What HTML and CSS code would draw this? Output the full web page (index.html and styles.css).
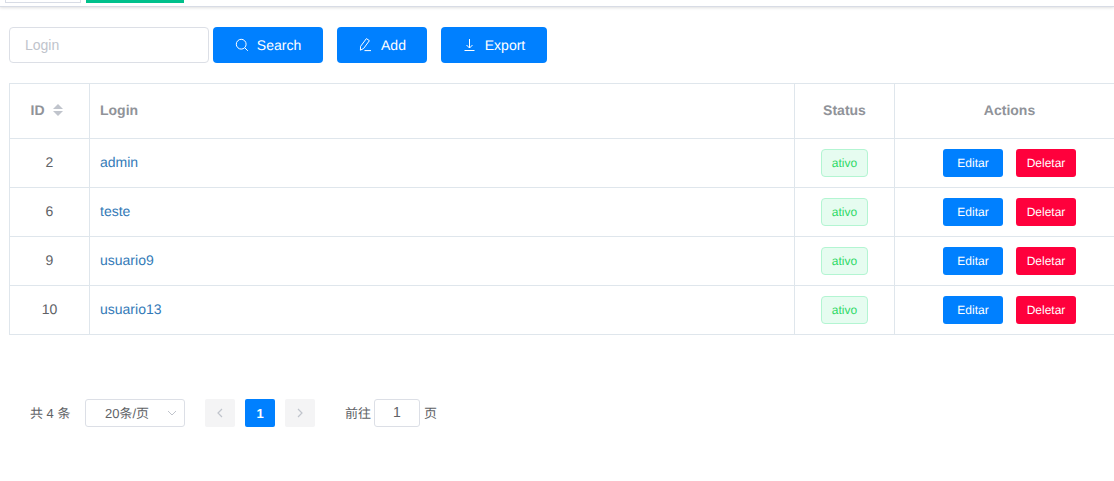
FILE: index.html
```html
<!DOCTYPE html>
<html lang="en">
<head>
  <meta charset="UTF-8">
  <title>Usuarios</title>
  <link rel="stylesheet" href="styles.css">
</head>
<body>
  <div class="tags-bar">
    <span class="tag"></span>
    <span class="tag tag-active"></span>
  </div>

  <div class="filter">
    <input class="filter-input" type="text" placeholder="Login">
    <button class="btn btn-search">
      <svg class="btn-icon" viewBox="0 0 14 14"><circle cx="6.2" cy="6.2" r="4.9"/><path d="M9.8 9.8l3 3"/></svg>
      <span>Search</span>
    </button>
    <button class="btn btn-add">
      <svg class="btn-icon" viewBox="0 0 14 14"><path d="M2.4 12.2l.2-3.9L8.4.6l3 2.1-5.8 7.8z"/><path d="M6.5 12.6h6.5"/></svg>
      <span>Add</span>
    </button>
    <button class="btn btn-export">
      <svg class="btn-icon" viewBox="0 0 14 14"><path d="M6.5 1v9M3.5 7l3 3 3-3M1.5 12.5h10"/></svg>
      <span>Export</span>
    </button>
  </div>

  <table class="users">
    <thead>
      <tr>
        <th class="col-id"><span class="id-head">ID<span class="sort"><i class="up"></i><i class="down"></i></span></span></th>
        <th class="col-login">Login</th>
        <th class="col-status">Status</th>
        <th class="col-actions">Actions</th>
      </tr>
    </thead>
    <tbody>
      <tr>
        <td class="col-id">2</td>
        <td class="col-login">admin</td>
        <td class="col-status"><span class="badge">ativo</span></td>
        <td class="col-actions"><button class="small edit">Editar</button><button class="small del">Deletar</button></td>
      </tr>
      <tr>
        <td class="col-id">6</td>
        <td class="col-login">teste</td>
        <td class="col-status"><span class="badge">ativo</span></td>
        <td class="col-actions"><button class="small edit">Editar</button><button class="small del">Deletar</button></td>
      </tr>
      <tr>
        <td class="col-id">9</td>
        <td class="col-login">usuario9</td>
        <td class="col-status"><span class="badge">ativo</span></td>
        <td class="col-actions"><button class="small edit">Editar</button><button class="small del">Deletar</button></td>
      </tr>
      <tr>
        <td class="col-id">10</td>
        <td class="col-login">usuario13</td>
        <td class="col-status"><span class="badge">ativo</span></td>
        <td class="col-actions"><button class="small edit">Editar</button><button class="small del">Deletar</button></td>
      </tr>
    </tbody>
  </table>

  <div class="pagination">
    <span class="total page-text">共 4 条</span>
    <div class="page-size">
      <span class="page-text">20条/页</span>
      <svg class="chev" viewBox="0 0 10 6"><path d="M1 1l4 4 4-4"/></svg>
    </div>
    <button class="page-btn"><svg viewBox="0 0 6 10"><path d="M5 1L1 5l4 4"/></svg></button>
    <button class="page-btn current">1</button>
    <button class="page-btn"><svg viewBox="0 0 6 10"><path d="M1 1l4 4-4 4"/></svg></button>
    <div class="jump">
      <span class="page-text">前往</span>
      <input class="jump-input" type="text" value="1">
      <span class="page-text">页</span>
    </div>
  </div>
</body>
</html>
```

FILE: styles.css
```css
html, body {
  overflow: hidden;
}

body {
  margin: 0;
  width: 1114px;
  height: 481px;
  background-color: #fff;
  font-family: "Liberation Sans", Arial, "Noto Sans CJK SC", sans-serif;
  font-size: 14px;
  color: #606266;
  text-rendering: geometricPrecision;
}

/* Top tags bar, cut off by the window */
.tags-bar {
  display: flex;
  gap: 5px;
  height: 6px;
  padding-left: 5px;
  background-color: #fff;
  border-bottom: 1px solid #d8dce5;
  box-shadow: 0 1px 3px rgba(0, 0, 0, 0.12);
}

.tag {
  box-sizing: border-box;
  width: 76px;
  height: 3px;
  border: 1px solid #d8dce5;
  border-top: none;
}

.tag-active {
  width: 98px;
  background-color: #00c08b;
  border: none;
}

.filter {
  display: flex;
  align-items: center;
  padding: 20px 0 0 9px;
}

.filter-input {
  box-sizing: border-box;
  width: 200px;
  height: 36px;
  padding: 0 15px;
  border: 1px solid #dcdfe6;
  border-radius: 4px;
  font-family: inherit;
  font-size: 14px;
  color: #606266;
  outline: none;
}

.filter-input::placeholder {
  color: #c0c4cc;
}

.btn {
  display: flex;
  align-items: center;
  justify-content: center;
  gap: 8px;
  height: 36px;
  padding: 0;
  border: none;
  border-radius: 4px;
  background-color: #0080ff;
  color: #fff;
  font-family: inherit;
  font-size: 14px;
  text-rendering: geometricPrecision;
}

.btn-search {
  width: 110px;
  margin-left: 4px;
}

.btn-add {
  gap: 9px;
  width: 90px;
  margin-left: 14px;
}

.btn-export {
  width: 106px;
  margin-left: 14px;
}

.btn-icon {
  width: 14px;
  height: 14px;
  fill: none;
  stroke: #fff;
  stroke-width: 1;
}

/* Table runs past the right edge of the window */
.users {
  width: 1116px;
  margin: 20px 0 0 9px;
  border-collapse: collapse;
  table-layout: fixed;
}

.users th,
.users td {
  padding: 0;
  border: 1px solid #dfe6ec;
}

.users th {
  height: 52px;
  padding-bottom: 2px;
  font-size: 14px;
  font-weight: bold;
  color: #909399;
  text-align: center;
}

.users td {
  height: 48px;
  text-align: center;
}

.users td.col-id,
.users td.col-login {
  height: 46px;
  padding-bottom: 2px;
}

.users .col-id {
  width: 79px;
}

.users th.col-id {
  padding-right: 6px;
  width: 73px;
}

.id-head {
  display: inline-flex;
  align-items: center;
  gap: 8px;
}

.users .col-login {
  padding-left: 10px;
  text-align: left;
}

.users td.col-login {
  color: #337ab7;
}

.users .col-status {
  width: 99px;
}

.users .col-actions {
  width: 229px;
}

.sort {
  display: inline-flex;
  flex-direction: column;
  gap: 2px;
}

.sort i {
  display: block;
  width: 0;
  height: 0;
  border-left: 5px solid transparent;
  border-right: 5px solid transparent;
}

.sort .up {
  border-bottom: 5px solid #c0c4cc;
}

.sort .down {
  border-top: 5px solid #c0c4cc;
}

.badge {
  display: inline-block;
  box-sizing: border-box;
  width: 47px;
  height: 28px;
  border: 1px solid #b3f5d2;
  border-radius: 4px;
  background-color: #e6fcf0;
  color: #30d968;
  font-size: 12px;
  line-height: 26px;
  vertical-align: middle;
}

.small {
  width: 60px;
  height: 28px;
  padding: 0;
  border: none;
  border-radius: 3px;
  color: #fff;
  font-family: inherit;
  font-size: 12px;
  text-rendering: geometricPrecision;
  vertical-align: middle;
}

.small.edit {
  background-color: #0080ff;
}

.small.del {
  margin-left: 13px;
  background-color: #ff003c;
}

.pagination {
  display: flex;
  align-items: center;
  height: 28px;
  margin-top: 64px;
  padding-left: 30px;
  font-size: 13px;
}

.page-text {
  padding-bottom: 2px;
}

.total {
  width: 55px;
}

.page-size {
  display: flex;
  align-items: center;
  justify-content: space-between;
  box-sizing: border-box;
  width: 100px;
  height: 28px;
  padding: 0 7px 0 19px;
  border: 1px solid #dcdfe6;
  border-radius: 3px;
}

.chev {
  width: 10px;
  height: 6px;
  fill: none;
  stroke: #c0c4cc;
}

.page-btn {
  display: flex;
  align-items: center;
  justify-content: center;
  width: 30px;
  height: 28px;
  margin-left: 10px;
  padding: 0;
  border: none;
  border-radius: 2px;
  background-color: #f4f4f5;
  font-family: inherit;
  font-size: 13px;
  font-weight: bold;
}

.page-btn svg {
  width: 6px;
  height: 10px;
  fill: none;
  stroke: #c0c4cc;
  stroke-width: 1.2;
}

.page-size + .page-btn {
  margin-left: 20px;
}

.page-btn.current {
  background-color: #0080ff;
  color: #fff;
}

.jump {
  display: flex;
  align-items: center;
  margin-left: 30px;
}

.jump-input {
  box-sizing: border-box;
  width: 46px;
  height: 28px;
  margin: 0 4px 0 3px;
  padding: 0 0 2px;
  border: 1px solid #dcdfe6;
  border-radius: 3px;
  font-family: inherit;
  font-size: 14px;
  color: #606266;
  text-align: center;
  outline: none;
}
```
